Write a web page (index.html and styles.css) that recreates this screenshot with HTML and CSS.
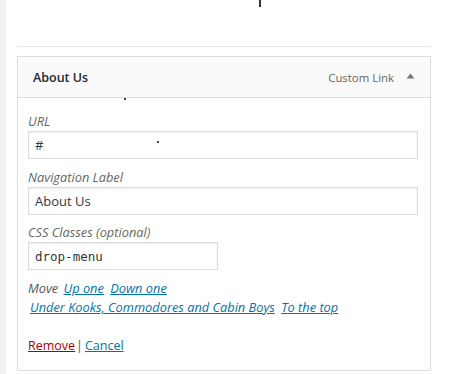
FILE: index.html
```html
<!DOCTYPE html>
<html lang="en">
<head>
    <meta charset="UTF-8">
    <title>Menu Item</title>
    <link rel="stylesheet" href="styles.css">
</head>
<body>
    <div class="screen">
        <div class="sidebar-edge"></div>

        <div class="menu">
            <!-- item above, scrolled mostly out of view -->
            <div class="prev-item">
                <span class="cut-mark"></span>
            </div>

            <div class="menu-item">
                <div class="item-bar">
                    <span class="item-title">About Us</span>
                    <span class="item-controls">
                        <span class="item-type">Custom Link</span>
                        <svg class="item-arrow" width="9" height="6" viewBox="0 0 9 6">
                            <path d="M0.5 5.5 L4.5 0.5 L8.5 5.5 Z" fill="#72777c"/>
                        </svg>
                    </span>
                </div>

                <div class="item-settings">
                    <span class="cut-dot"></span>

                    <label class="field">
                        <span class="field-label">URL</span>
                        <span class="input">#<span class="stray-dot"></span></span>
                    </label>

                    <label class="field">
                        <span class="field-label">Navigation Label</span>
                        <span class="input">About Us</span>
                    </label>

                    <label class="field">
                        <span class="field-label">CSS Classes (optional)</span>
                        <span class="input short mono">drop-menu</span>
                    </label>

                    <div class="move">
                        <div>
                            <span class="move-label">Move</span>
                            <a href="#">Up one</a>
                            <a href="#">Down one</a>
                        </div>
                        <div class="move-line">
                            <a href="#">Under Kooks, Commodores and Cabin Boys</a>
                            <a href="#">To the top</a>
                        </div>
                    </div>

                    <div class="actions">
                        <a href="#" class="remove">Remove</a><span class="sep">|</span><a href="#">Cancel</a>
                    </div>
                </div>
            </div>
        </div>
    </div>
</body>
</html>
```

FILE: styles.css
```css
body {
    margin: 0;
    background: #fff;
    font-family: 'Open Sans', sans-serif;
    font-size: 12px;
    color: #444;
}

.screen {
    display: flex;
    min-height: 374px;
}

.sidebar-edge {
    width: 6px;
    background: #f1f1f1;
}

.menu {
    padding-left: 11px;
    width: 414px;
}

.prev-item {
    height: 46px;
    border-bottom: 1px solid #e5e5e5;
}

.cut-mark {
    display: block;
    width: 2px;
    height: 7px;
    margin-left: 242px;
    background: #333;
}

.menu-item {
    margin-top: 9px;
}

.item-bar {
    display: flex;
    align-items: center;
    justify-content: space-between;
    height: 40px;
    padding: 0 15px;
    background: #fafafa;
    border: 1px solid #dcdcdc;
}

.item-title {
    font-size: 12.5px;
    font-weight: 600;
    color: #23282d;
}

.item-controls {
    display: flex;
    align-items: center;
    gap: 12px;
}

.item-type {
    font-size: 11.4px;
    color: #666;
}

.item-arrow {
    display: block;
    margin-top: -2px;
}

.item-settings {
    border: 1px solid #dcdcdc;
    border-top: 0;
    padding: 14px 12px 15px 10px;
}

.cut-dot {
    display: block;
    width: 2px;
    height: 2px;
    margin: -14px 0 12px 96px;
    background: #3a3a6a;
}

.field {
    display: block;
    margin-bottom: 8.5px;
}

.field-label {
    display: block;
    line-height: 19px;
    font-size: 12.8px;
    font-style: italic;
    color: #666;
}

.input {
    display: flex;
    align-items: center;
    box-sizing: border-box;
    height: 28px;
    padding: 0 6px;
    border: 1px solid #ddd;
    box-shadow: inset 0 1px 2px rgba(0, 0, 0, 0.07);
    font-size: 13px;
    color: #32373c;
}

.input.short {
    width: 190px;
}

.mono {
    font-family: 'DejaVu Sans Mono', monospace;
    font-size: 12.5px;
}

.stray-dot {
    width: 2px;
    height: 2px;
    margin: -6px 0 0 114px;
    background: #444;
}

.move {
    line-height: 19px;
    font-size: 12.8px;
    font-style: italic;
    margin-top: 9px;
}

.move-label {
    color: #555;
    margin-right: 2px;
}

.move-line {
    padding-left: 2px;
}

.move a {
    color: #0073aa;
    margin-right: 3px;
}

.actions {
    margin-top: 19px;
    line-height: 19px;
    font-size: 12.5px;
}

.actions a {
    color: #0073aa;
}

.actions a.remove {
    color: #a00;
}

.sep {
    margin: 0 2px 0 1px;
    color: #555;
}
```
